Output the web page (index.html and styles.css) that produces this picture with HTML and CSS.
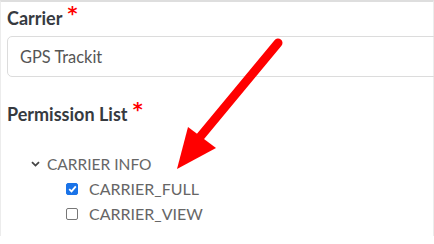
FILE: index.html
```html
<!DOCTYPE html>
<html>
<head>
<meta charset="utf-8">
<link rel="stylesheet" href="styles.css">
</head>
<body>
<div class="panel">
  <div class="field">
    <label class="label">Carrier <span class="req">*</span></label>
    <div class="input">GPS Trackit</div>
  </div>
  <div class="field perm">
    <label class="label">Permission List <span class="req">*</span></label>
    <ul class="tree">
      <li class="group">
        <span class="chev"><svg width="9" height="6" viewBox="0 0 9 6"><path d="M1 1.2 L4.5 4.6 L8 1.2" fill="none" stroke="#444" stroke-width="1.8"/></svg></span>
        <span class="gtext">CARRIER INFO</span>
      </li>
      <li class="item"><span class="cb checked"><svg width="9" height="8" viewBox="0 0 9 8"><path d="M1.2 4.2 L3.5 6.4 L7.8 1.4" fill="none" stroke="#fff" stroke-width="1.8"/></svg></span><span>CARRIER_FULL</span></li>
      <li class="item"><span class="cb"></span><span>CARRIER_VIEW</span></li>
    </ul>
  </div>
</div>
<svg class="arrow" width="434" height="244" viewBox="0 0 434 244">
  <line x1="278" y1="43" x2="200" y2="137" stroke="#ff0000" stroke-width="9" stroke-linecap="round"/>
  <polygon points="188,127 216,148 177,169" fill="#ff0000"/>
</svg>
</body>
</html>
```
FILE: styles.css
```css
html, body {
  margin: 0;
  padding: 0;
  background: #fff;
}
body {
  width: 434px;
  height: 244px;
  overflow: hidden;
  position: relative;
  font-family: "Lato", "Liberation Sans", sans-serif;
}
.panel {
  box-sizing: border-box;
  height: 236px;
  border-top: 2px solid #dedede;
  border-left: 1px solid #ececec;
  border-right: 1px solid #ececec;
  padding: 5px 0 0 6px;
}
.label {
  display: block;
  font-weight: 700;
  font-size: 18px;
  color: #363a3f;
  line-height: 22px;
  height: 22px;
}
.req {
  color: #ff0000;
  font-size: 19px;
  line-height: 0;
  font-family: "DejaVu Sans", sans-serif;
  position: relative;
  top: -5px;
  margin-left: 1px;
}
.input {
  margin-top: 7px;
  margin-right: -20px;
  height: 41px;
  box-sizing: border-box;
  border: 1px solid #dcdcdc;
  border-radius: 5px;
  padding-left: 12px;
  display: flex;
  align-items: center;
  font-size: 16.4px;
  color: #555;
}
.perm {
  margin-top: 26px;
}
.tree {
  list-style: none;
  margin: 26px 0 0 0;
  padding: 0;
  color: #666;
  font-size: 16px;
}
.group {
  display: flex;
  align-items: center;
  height: 25px;
  padding-left: 24px;
}
.gtext {
  font-size: 15.5px;
}
.chev {
  width: 16px;
  display: flex;
  align-items: center;
}
.item {
  display: flex;
  align-items: center;
  height: 25px;
  padding-left: 59px;
}
.cb {
  box-sizing: border-box;
  width: 12px;
  height: 12px;
  border: 1px solid #777;
  border-radius: 2px;
  margin-right: 11px;
  display: flex;
  align-items: center;
  justify-content: center;
}
.cb.checked {
  background: #1a73e8;
  border-color: #1a73e8;
}
.arrow {
  position: absolute;
  left: 0;
  top: 0;
}
```
